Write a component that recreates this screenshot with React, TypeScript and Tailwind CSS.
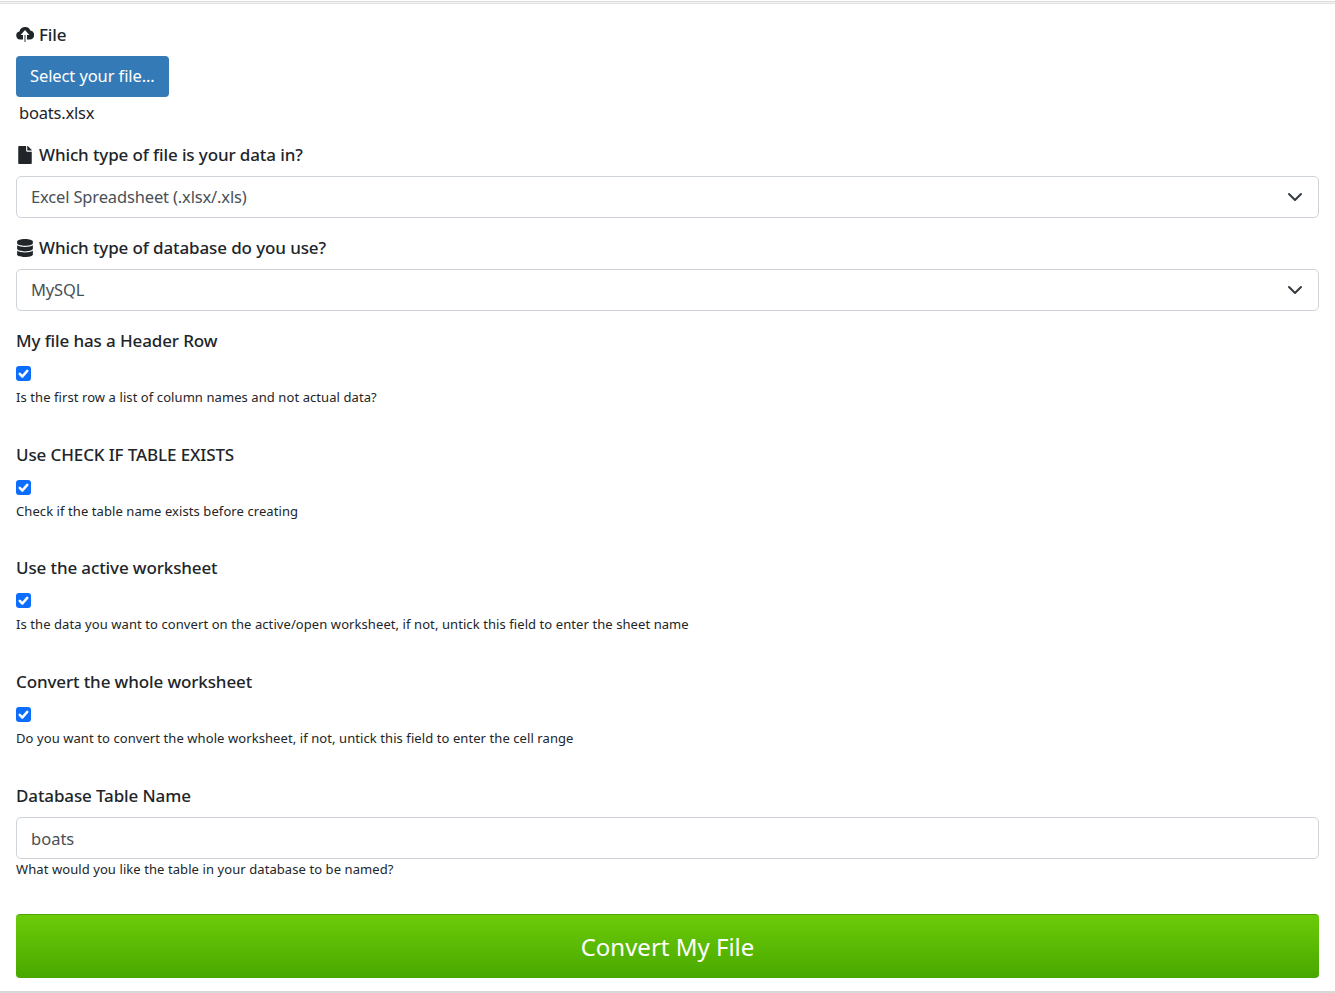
import { ReactNode } from "react";
import { FaDatabase, FaFile } from "react-icons/fa";

function Label({ icon, children }: { icon?: ReactNode; children: ReactNode }) {
  return (
    <label className="flex h-[27px] items-center pb-px text-[17px] leading-[26px] font-medium tracking-[-0.12px] text-[#212529]">
      {icon && <span className="mr-[5px] flex w-[18px] justify-center">{icon}</span>}
      {children}
    </label>
  );
}

function SelectField({ value }: { value: string }) {
  return (
    <div className="relative mt-[7px] h-[42px]">
      <select
        defaultValue={value}
        className="h-full w-full appearance-none rounded-[5px] border border-[#ced4da] bg-white px-[14px] text-[16.5px] tracking-[-0.15px] text-[#495057]"
      >
        <option>{value}</option>
      </select>
      <svg
        viewBox="0 0 16 16"
        className="pointer-events-none absolute top-[13px] right-[16px] h-4 w-4"
        fill="none"
        stroke="#343a40"
        strokeWidth="2"
        strokeLinecap="round"
        strokeLinejoin="round"
      >
        <path d="M2 5l6 6 6-6" />
      </svg>
    </div>
  );
}

function CheckRow({ label, help }: { label: string; help: string }) {
  return (
    <div className="h-[113.6px]">
      <Label>{label}</Label>
      <span className="mt-[11px] flex h-[15px] w-[15px] items-center justify-center rounded-[3px] bg-[#0d6efd]">
        <svg viewBox="0 0 20 20" className="h-[15px] w-[15px]" fill="none" stroke="#fff" strokeWidth="3.4" strokeLinecap="round" strokeLinejoin="round">
          <path d="M5 10.500l3.500 3.500 6.500-7.500" />
        </svg>
      </span>
      <p className="mt-[6px] text-[13px] leading-[21px] tracking-[0.08px] text-[#212529]">{help}</p>
    </div>
  );
}

function CloudIcon() {
  return (
    <svg viewBox="0 0 18 20" className="h-5 w-[18px] -translate-y-px">
      <path
        fill="#212529"
        d="M4 15.500a4 4 0 0 1-.6-7.900A5.800 5.800 0 0 1 14.400 6.400a4.600 4.600 0 0 1-.4 9.100H11V11h2.300L9 6 4.700 11H7v4.500z"
      />
      <path fill="#8f9aa5" d="M8 11h2v7H8z" />
    </svg>
  );
}

export default function App() {
  return (
    <div className="h-[993px] overflow-hidden bg-white font-['Noto_Sans',sans-serif]">
      <div className="mt-px h-px bg-[#dcdcdc]" />
      <div className="h-px bg-[#f3f3f3]" />
      <div className="h-px bg-[#e3e3e3]" />
      <form className="px-4 pt-[18px]">
        <Label icon={<CloudIcon />}>File</Label>
        <button type="button" className="mt-[7px] h-[41px] rounded-[4px] bg-[#337ab7] px-[14px] text-[16.5px] tracking-[-0.1px] text-white">
          Select your file...
        </button>
        <p className="mt-[2px] pl-[3px] text-[16.5px] leading-[27px] tracking-[-0.2px] text-[#212529]">boats.xlsx</p>

        <div className="mt-[16px]">
          <Label icon={<FaFile className="h-[18px] w-[14px] text-[#212529]" />}>Which type of file is your data in?</Label>
          <SelectField value="Excel Spreadsheet (.xlsx/.xls)" />
        </div>
        <div className="mt-[17px]">
          <Label icon={<FaDatabase className="h-[18px] w-[16px] text-[#212529]" />}>Which type of database do you use?</Label>
          <SelectField value="MySQL" />
        </div>

        <div className="mt-[17px]">
          <CheckRow label="My file has a Header Row" help="Is the first row a list of column names and not actual data?" />
          <CheckRow label="Use CHECK IF TABLE EXISTS" help="Check if the table name exists before creating" />
          <CheckRow label="Use the active worksheet" help="Is the data you want to convert on the active/open worksheet, if not, untick this field to enter the sheet name" />
          <CheckRow label="Convert the whole worksheet" help="Do you want to convert the whole worksheet, if not, untick this field to enter the cell range" />
        </div>

        <div className="pt-px">
          <Label>Database Table Name</Label>
          <input
            defaultValue="boats"
            className="mt-[7px] block h-[42px] w-full rounded-[5px] border border-[#ced4da] bg-white px-[14px] text-[16.5px] text-[#495057]"
          />
          <p className="text-[13px] leading-[21px] tracking-[0.08px] text-[#212529]">What would you like the table in your database to be named?</p>
        </div>

        <button
          type="button"
          className="mt-[34px] h-[64px] w-full rounded-[4px] border-t border-[#4aa800] bg-gradient-to-b from-[#6ccb08] to-[#48a800] text-[24px] text-white"
        >
          Convert My File
        </button>
      </form>
      <div className="mt-[13px] h-[2px] bg-[#d8d8d8]" />
    </div>
  );
}
